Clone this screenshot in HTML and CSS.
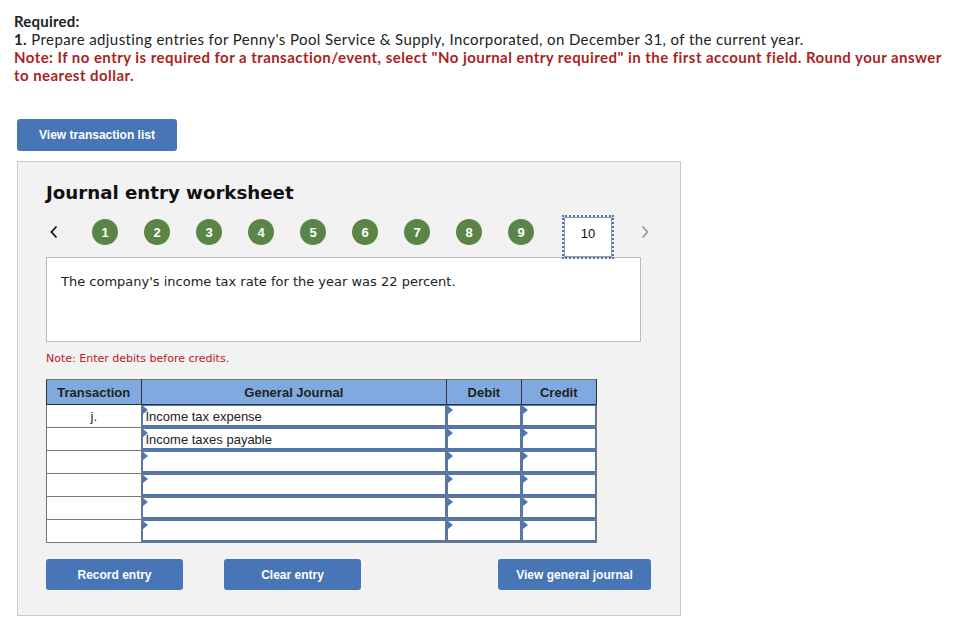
FILE: index.html
```html
<!DOCTYPE html>
<html>
<head>
<meta charset="utf-8">
<link rel="stylesheet" href="styles.css">
</head>
<body>
<div class="intro">
  <div class="req">Required:</div>
  <div class="line"><b>1.</b> Prepare adjusting entries for Penny's Pool Service &amp; Supply, Incorporated, on December 31, of the current year.</div>
  <div class="note">Note: If no entry is required for a transaction/event, select "No journal entry required" in the first account field. Round your answer to nearest dollar.</div>
</div>
<button class="btn btn-list">View transaction list</button>
<div class="panel">
  <h2 class="title">Journal entry worksheet</h2>
  <div class="nav">
    <span class="prev"><svg width="12" height="16" viewBox="0 0 12 16"><path d="M8.5 2.5 L3.5 8 L8.5 13.5" fill="none" stroke="#111" stroke-width="1.8"/></svg></span>
    <span class="slot"><span class="dot">1</span></span>
    <span class="slot"><span class="dot">2</span></span>
    <span class="slot"><span class="dot">3</span></span>
    <span class="slot"><span class="dot">4</span></span>
    <span class="slot"><span class="dot">5</span></span>
    <span class="slot"><span class="dot">6</span></span>
    <span class="slot"><span class="dot">7</span></span>
    <span class="slot"><span class="dot">8</span></span>
    <span class="slot"><span class="dot">9</span></span>
    <span class="current"><span class="current-in">10</span></span>
    <span class="next"><svg width="12" height="16" viewBox="0 0 12 16"><path d="M3.5 2.5 L8.5 8 L3.5 13.5" fill="none" stroke="#9a9a9a" stroke-width="1.8"/></svg></span>
  </div>
  <div class="desc">The company's income tax rate for the year was 22 percent.</div>
  <div class="hint">Note: Enter debits before credits.</div>
  <table class="journal">
    <colgroup><col class="c-t"><col class="c-g"><col class="c-d"><col class="c-c"></colgroup>
    <thead>
      <tr><th>Transaction</th><th>General Journal</th><th>Debit</th><th>Credit</th></tr>
    </thead>
    <tbody>
      <tr><td class="tx">j.</td><td class="in"><div class="box">Income tax expense</div></td><td class="in"><div class="box"></div></td><td class="in"><div class="box"></div></td></tr>
      <tr><td class="tx"></td><td class="in"><div class="box">Income taxes payable</div></td><td class="in"><div class="box"></div></td><td class="in"><div class="box"></div></td></tr>
      <tr><td class="tx"></td><td class="in"><div class="box"></div></td><td class="in"><div class="box"></div></td><td class="in"><div class="box"></div></td></tr>
      <tr><td class="tx"></td><td class="in"><div class="box"></div></td><td class="in"><div class="box"></div></td><td class="in"><div class="box"></div></td></tr>
      <tr><td class="tx"></td><td class="in"><div class="box"></div></td><td class="in"><div class="box"></div></td><td class="in"><div class="box"></div></td></tr>
      <tr><td class="tx"></td><td class="in"><div class="box"></div></td><td class="in"><div class="box"></div></td><td class="in"><div class="box"></div></td></tr>
    </tbody>
  </table>
  <div class="actions">
    <button class="btn btn-rec">Record entry</button>
    <button class="btn btn-clr">Clear entry</button>
    <button class="btn btn-gen">View general journal</button>
  </div>
</div>
</body>
</html>
```
FILE: styles.css
```css
html, body { margin: 0; padding: 0; background: #fff; }
body { font-family: "Lato", "Open Sans", sans-serif; color: #222; }

.intro { padding: 12px 0 0 14px; font-size: 15px; line-height: 18px; letter-spacing: 0.4px; }
.req { font-weight: bold; letter-spacing: 0.2px; }
.line b { font-weight: bold; }
.note { color: #ab1f1f; font-weight: bold; letter-spacing: 0.45px; }

.btn {
  display: block;
  background: #4775b5;
  color: #fff;
  border: 0;
  border-radius: 3px;
  font-family: "Liberation Sans", Arial, sans-serif;
  font-weight: bold;
  font-size: 12px;
  letter-spacing: 0;
  cursor: pointer;
  padding: 0;
}
.btn-list { margin: 35px 0 0 17px; width: 160px; height: 32px; }

.panel {
  margin: 10px 0 0 17px;
  height: 453px;
  background: #f2f2f2;
  border: 1px solid #c8c8c8;
  padding: 0 0 0 28px;
  box-sizing: content-box;
  width: 634px;
}
.title {
  margin: 19px 0 0 0;
  font-family: "DejaVu Sans", Verdana, sans-serif;
  font-size: 18.2px;
  line-height: 24px;
  font-weight: bold;
  color: #111;
}
.nav { display: flex; align-items: flex-start; height: 44px; margin-top: 10px; }
.prev { width: 33px; display: flex; align-items: center; height: 26px; margin-top: 4px; padding-left: 2px; box-sizing: border-box; }
.slot { width: 52px; display: flex; justify-content: center; margin-top: 4px; }
.dot {
  width: 26px; height: 26px; border-radius: 50%;
  background: #5a8547; color: #fff;
  font-family: "Liberation Sans", Arial, sans-serif; font-size: 13px; font-weight: bold;
  display: flex; align-items: center; justify-content: center;
}
.current {
  margin-left: 15px; width: 52px; height: 44px; box-sizing: border-box;
  border: 2px dotted #4a76b6; position: relative; z-index: 1;
}
.current-in {
  display: block; text-align: center;
  height: 100%; background: #fff; border: 1px solid #999; box-sizing: border-box;
  padding-top: 8px; line-height: 16px;
  font-family: "Liberation Sans", Arial, sans-serif; font-size: 13px; color: #111;
}
.next { margin-left: 25px; display: flex; align-items: center; height: 26px; margin-top: 4px; }

.desc {
  margin-top: -2px;
  width: 595px; height: 85px; box-sizing: border-box;
  background: #fff; border: 1px solid #bbb;
  padding: 15px 14px 0 14px;
  font-family: "DejaVu Sans", Verdana, sans-serif; font-size: 13px; line-height: 18px; color: #222;
}
.hint {
  margin-top: 10px;
  font-family: "DejaVu Sans", Verdana, sans-serif; font-size: 11px; line-height: 14px; color: #b22222;
}

.journal {
  margin-top: 13px;
  border-collapse: collapse;
  width: 551px;
  table-layout: fixed;
  font-family: "Liberation Sans", Arial, sans-serif;
  border: 1px solid #777;
}
.c-t { width: 94px; }
.c-g { width: 304px; }
.c-d { width: 74px; }
.c-c { width: 75px; }
.journal th {
  background: #80aadf; color: #222; font-weight: bold; font-size: 13px;
  height: 24px; padding: 0; border: 1px solid #333; border-top-color: #777;
}
.journal td { height: 22px; padding: 0; border: 1px solid #777; background: #fff; font-size: 13px; }
.journal td.tx { text-align: center; color: #222; }
.box {
  position: relative;
  height: 22px; box-sizing: border-box;
  border: 1px solid #4a76b6; border-width: 1px 1px 2px 1px;
  padding: 3px 0 0 3px; line-height: 15px; color: #222;
  white-space: nowrap; overflow: hidden;
}
.box::before {
  content: ""; position: absolute; left: 0; top: 0;
  border-left: 5px solid #4a76b6; border-top: 4px solid transparent; border-bottom: 4px solid transparent;
}

.actions { display: flex; margin-top: 16px; }
.btn-rec { width: 137px; height: 31px; }
.btn-clr { width: 137px; height: 31px; margin-left: 41px; }
.btn-gen { width: 153px; height: 31px; margin-left: 137px; }
```
